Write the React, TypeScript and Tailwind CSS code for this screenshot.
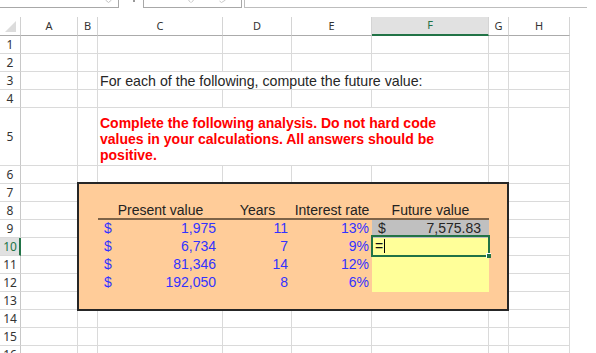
import React from "react";

const LETTERS = ["A", "B", "C", "D", "E", "F", "G", "H"];
const ROWS = Array.from({ length: 16 }, (_, i) => i + 1);

// B7:G13 is drawn by the bordered block, so the plain cells there are skipped
const inBlock = (row: number, col: number) => row >= 7 && row <= 13 && col >= 1 && col <= 6;

// text spills over these cells, so the gridline on their right is hidden
const noRightLine = new Set(["C3", "D3", "E3", "C5", "D5", "E5"]);

const figures = [
    { pv: "1,975", years: "11", rate: "13%" },
    { pv: "6,734", years: "7", rate: "9%" },
    { pv: "81,346", years: "14", rate: "12%" },
    { pv: "192,050", years: "8", rate: "6%" },
];

const headings = ["Present value", "Years", "Interest rate", "Future value"];

function FormulaStrip() {
    return (
        <div className="flex h-[8px]">
            <div className="flex h-full w-[119px] justify-end border-b border-r border-[#a8a8a8] pr-[6px]">
                <svg width="7" height="3" viewBox="0 0 7 3">
                    <polyline points="0.5,0 3.5,2.5 6.5,0" fill="none" stroke="#c4c4c4" strokeWidth="1" />
                </svg>
            </div>
            <div className="flex w-[24px] justify-center pl-[6px]">
                <div className="h-[2px] w-[2px] rounded-full bg-[#777]" />
            </div>
            <div className="flex h-full w-[99px] gap-[25px] border-b border-l border-r border-[#a8a8a8] pl-[44px]">
                <svg width="6" height="3" viewBox="0 0 6 3">
                    <path d="M0.5 0 L2.5 2.5 M5.5 0 L3.5 2.5" stroke="#c8c8c8" strokeWidth="1" />
                </svg>
                <svg width="7" height="3" viewBox="0 0 7 3">
                    <path d="M0.5 1 L2.5 2.5 L6.5 0" fill="none" stroke="#c8c8c8" strokeWidth="1" />
                </svg>
            </div>
            <div className="ml-[2px] h-full w-[343px] border-b border-l border-[#bdbdbd]" />
        </div>
    );
}

function Corner() {
    return (
        <div className="flex items-end justify-end border-b border-r border-b-[#ababab] border-r-[#d0d0d0] pb-[3px] pr-[4px]">
            <svg width="11" height="11" viewBox="0 0 11 11">
                <polygon points="11,0 11,11 0,11" fill="#dcdcdc" />
            </svg>
        </div>
    );
}

function ColHeader({ letter }: { letter: string }) {
    if (letter === "F") {
        return (
            <div className="flex items-center justify-center border-b-2 border-r border-b-[#217346] border-r-[#d4d4d4] bg-[#e1e1e1] font-['Noto_Sans',sans-serif] text-[11px] text-[#217346]">
                {letter}
            </div>
        );
    }
    return (
        <div className="flex items-center justify-center border-b border-r border-b-[#ababab] border-r-[#d4d4d4] font-['Noto_Sans',sans-serif] text-[11px] text-[#333]">
            {letter}
        </div>
    );
}

function RowHeader({ row }: { row: number }) {
    if (row === 10) {
        return (
            <div className="flex items-center justify-center border-b border-r-2 border-b-[#dadada] border-r-[#217346] bg-[#e1e1e1] pl-[1px] font-['Noto_Sans',sans-serif] text-[12px] text-[#217346]">
                {row}
            </div>
        );
    }
    return (
        <div className="flex items-center justify-center border-b border-r border-b-[#dadada] border-r-[#c8c8c8] font-['Noto_Sans',sans-serif] text-[12px] text-[#333]">
            {row}
        </div>
    );
}

function SheetCell({ id }: { id: string }) {
    const line = noRightLine.has(id) ? "border-b" : "border-b border-r";
    return (
        <div className={`flex items-end ${line} border-[#dadada]`}>
            {id === "C3" && (
                <span className="whitespace-nowrap pl-[2px] text-[14.2px] leading-4 text-[#262626]">
                    For each of the following, compute the future value:
                </span>
            )}
            {id === "C5" && (
                <p className="whitespace-nowrap pb-[2px] pl-[2px] font-bold leading-4 text-[#ff0000]">
                    Complete the following analysis. Do not hard code
                    <br />
                    values in your calculations. All answers should be
                    <br />
                    positive.
                </p>
            )}
        </div>
    );
}

function FutureValue({ index }: { index: number }) {
    if (index === 0) {
        return (
            <div className="flex items-end justify-between bg-[#c0c0c0] pb-[2px] pl-[6px] pr-[8px] leading-4 text-[#262626]">
                <span>$</span>
                <span>7,575.83</span>
            </div>
        );
    }
    if (index === 1) {
        return (
            <div className="relative flex items-end bg-[#ffff99] pb-[2px] pl-[3px] leading-4 text-[#111]">
                <span>=</span>
                <span className="mb-[1px] ml-[1px] h-[14px] w-px bg-black" />
                <div className="absolute -bottom-px -left-px -right-px -top-[3px] border-2 border-[#217346]" />
                <div className="absolute -bottom-[2px] -right-[2px] h-[5px] w-[5px] border-l border-t border-white bg-[#217346]" />
            </div>
        );
    }
    return <div className="bg-[#ffff99]" />;
}

function SummaryBlock() {
    return (
        <div className="col-start-3 col-end-9 row-start-8 row-end-15 -mb-px -ml-px -mt-[2px] grid grid-cols-[19px_125px_69px_80px_117px_18px] grid-rows-[repeat(6,18px)_17px] border-2 border-[#262626] bg-[#ffcc99]">
            <div className="col-span-6" />
            <div />
            {headings.map((h) => (
                <div
                    key={h}
                    className="flex items-end justify-center whitespace-nowrap border-b-2 border-[#7d6247] leading-4 text-[#222]"
                >
                    {h}
                </div>
            ))}
            <div />
            {figures.map((f, i) => (
                <React.Fragment key={f.pv}>
                    <div />
                    <div className="flex items-end justify-between pb-[2px] pl-[6px] pr-[7px] leading-4 text-[#3333ff]">
                        <span>$</span>
                        <span>{f.pv}</span>
                    </div>
                    <div className="flex items-end justify-end pb-[2px] pr-[4px] leading-4 text-[#3333ff]">
                        {f.years}
                    </div>
                    <div className="flex items-end justify-end pb-[2px] pr-[3px] leading-4 text-[#3333ff]">
                        {f.rate}
                    </div>
                    <FutureValue index={i} />
                    <div />
                </React.Fragment>
            ))}
        </div>
    );
}

export default function App() {
    return (
        <div className="h-[353px] w-[596px] overflow-hidden bg-white">
            <FormulaStrip />
            <div className="mt-[9px] grid grid-cols-[21px_57px_20px_125px_69px_80px_117px_20px_61px] grid-rows-[19px_repeat(4,18px)_58px_repeat(11,18px)] font-['Liberation_Sans',Arial,sans-serif] text-[14px]">
                <Corner />
                {LETTERS.map((l) => (
                    <ColHeader key={l} letter={l} />
                ))}
                {ROWS.map((r) => (
                    <React.Fragment key={r}>
                        <RowHeader row={r} />
                        {LETTERS.map((l, c) =>
                            inBlock(r, c) ? null : <SheetCell key={l} id={`${l}${r}`} />
                        )}
                    </React.Fragment>
                ))}
                <SummaryBlock />
            </div>
        </div>
    );
}
